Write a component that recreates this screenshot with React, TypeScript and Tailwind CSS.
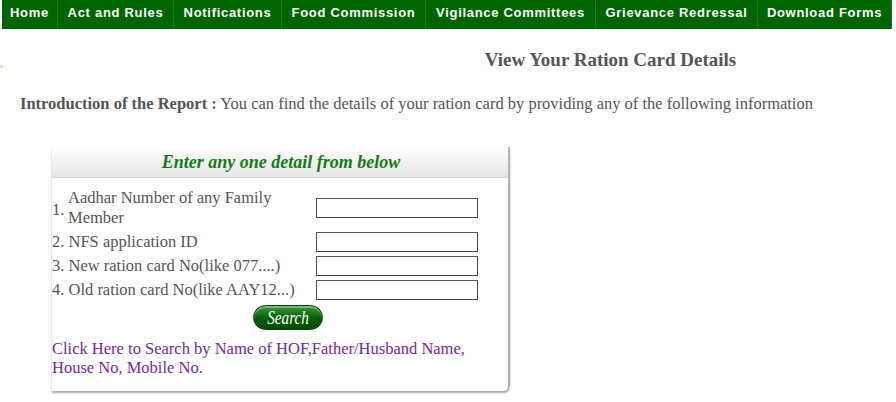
import React from "react";

const navItems = [
  { label: "Home", w: "w-[56px]" },
  { label: "Act and Rules", w: "w-[116px]" },
  { label: "Notifications", w: "w-[108px]" },
  { label: "Food Commission", w: "w-[144px]" },
  { label: "Vigilance Committees", w: "w-[170px]" },
  { label: "Grievance Redressal", w: "w-[162px]" },
  { label: "Download Forms", w: "w-[134px]" },
];

const rows = [
  { no: "2.", label: "NFS application ID" },
  { no: "3.", label: "New ration card No(like 077....)" },
  { no: "4.", label: "Old ration card No(like AAY12...)" },
];

function TextBox() {
  return (
    <input
      type="text"
      className="h-[20px] w-[162px] border border-t-[#555] border-l-[#555] border-r-[#444] border-b-[#444] bg-white outline-none"
    />
  );
}

export default function App() {
  return (
    <div className="relative h-[402px] w-[896px] overflow-hidden bg-white font-['Liberation_Serif',serif] text-[#555]">
      {/* Menu bar */}
      <div className="ml-[2px] flex h-[29px] w-fit bg-[#006400]">
        {navItems.map((item) => (
          <div
            key={item.label}
            className={`${item.w} flex shrink-0 items-center justify-center whitespace-nowrap border-r border-[#1f7a1f] pb-[3px] font-['Liberation_Sans',Arial,sans-serif] text-[13px] font-bold tracking-[0.7px] text-white`}
          >
            {item.label}
          </div>
        ))}
      </div>
      <span className="absolute left-0 top-[65px] h-[3px] w-[3px] rounded-full bg-[#f4d7b0]" />

      {/* Title */}
      <h1 className="ml-[325px] mt-[20px] text-center text-[19px] font-bold leading-[22px] text-[#555]">
        View Your Ration Card Details
      </h1>

      {/* Intro */}
      <p className="ml-[20px] mt-[23px] text-[16.5px] leading-[20px] text-[#555]">
        <b>Introduction of the Report :</b> You can find the details of your ration card by providing any of the
        following information
      </p>

      {/* Search panel */}
      <div className="ml-[52px] mt-[33px] w-[458px] rounded-br-[6px] border-r-2 border-[#b5b5b5] pb-[14px] shadow-[0_2px_2px_rgba(0,0,0,0.35)]">
        <div className="mt-[4px] flex h-[31px] items-center justify-center rounded-tr-[4px] border-b border-[#d6d6d6] bg-gradient-to-b from-white to-[#e6e6e6] pl-[2px]">
          <span className="text-[18px] font-bold italic text-[#157a15]">Enter any one detail from below</span>
        </div>

        <div className="mt-[10px] flex flex-col gap-[4px] text-[16.5px] leading-[20px] text-[#555]">
          <div className="flex items-center">
            <div className="flex w-[264px] items-center">
              <span className="w-[16px] pt-[4px]">1.</span>
              <span className="w-[220px]">Aadhar Number of any Family Member</span>
            </div>
            <TextBox />
          </div>
          {rows.map((r) => (
            <div key={r.no} className="flex items-center">
              <div className="w-[264px]">
                {r.no} {r.label}
              </div>
              <TextBox />
            </div>
          ))}
        </div>

        <div className="mt-[5px] flex justify-center pl-[16px]">
          <button className="flex h-[25px] w-[70px] items-center justify-center rounded-full border border-[#0b3d0b] bg-gradient-to-b from-[#3a9a3a] via-[#0a5f0a] to-[#024a02] shadow-[inset_0_2px_1px_rgba(255,255,255,0.35)]">
            <span className="inline-block scale-x-[0.8] text-[19px] italic leading-none text-white">Search</span>
          </button>
        </div>

        <a className="mt-[9px] block w-[440px] cursor-pointer text-[16.5px] leading-[19px] text-[#7a1fa0]">
          Click Here to Search by Name of HOF,Father/Husband Name, House No, Mobile No.
        </a>
      </div>
    </div>
  );
}
